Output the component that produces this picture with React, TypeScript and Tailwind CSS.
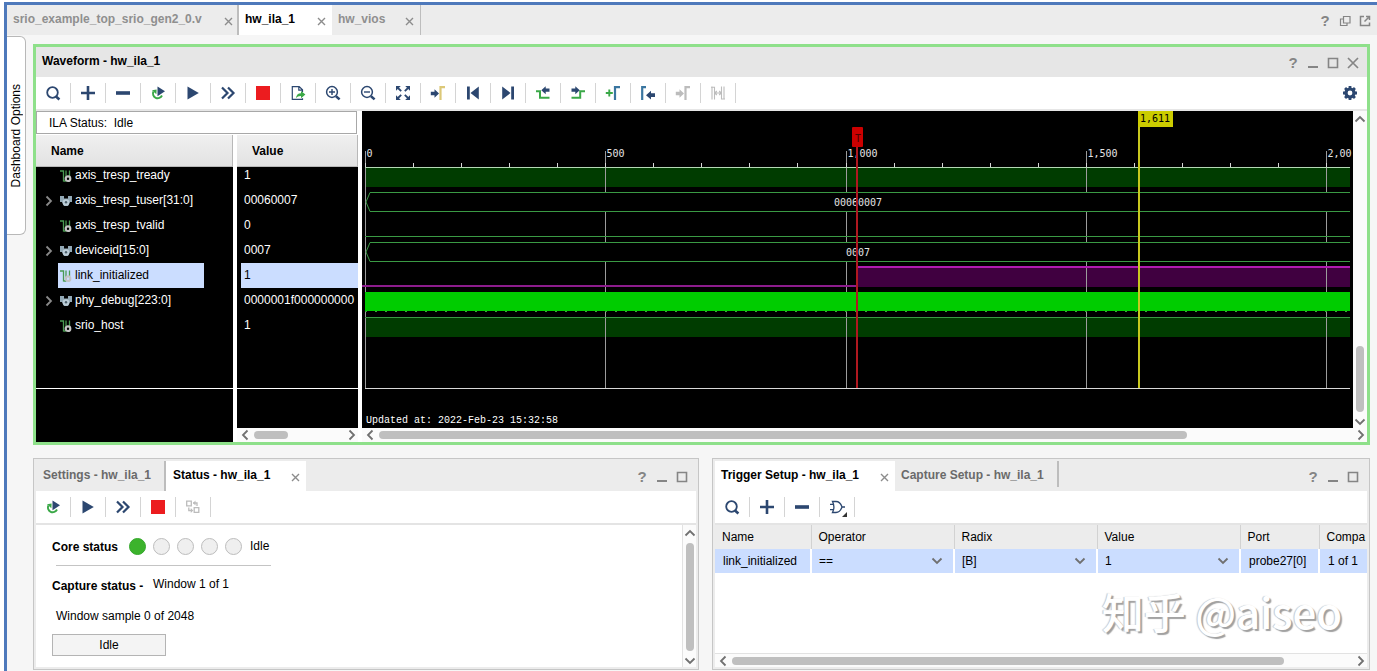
import React, { useState } from 'react';
import clsx from 'clsx';

type Signal = { name: string; value: string; bus?: boolean };

const SIGNALS: Signal[] = [
  { name: 'axis_tresp_tready', value: '1' },
  { name: 'axis_tresp_tuser[31:0]', value: '00060007', bus: true },
  { name: 'axis_tresp_tvalid', value: '0' },
  { name: 'deviceid[15:0]', value: '0007', bus: true },
  { name: 'link_initialized', value: '1' },
  { name: 'phy_debug[223:0]', value: '0000001f000000000', bus: true },
  { name: 'srio_host', value: '1' },
];

const NAVY = '#2c4770';
const GREEN = '#3aa847';
const DIM = '#bcbcbc';

// ── Icons ────────────────────────────────────────────────────────────────────

const Icon: React.FC<{ children: React.ReactNode }> = ({ children }) => (
  <svg width="16" height="16" viewBox="0 0 16 16" fill="none" className="shrink-0">
    {children}
  </svg>
);

const SearchIcon = () => (
  <Icon>
    <circle cx="7.5" cy="7.5" r="5.3" stroke={NAVY} strokeWidth="1.8" />
    <path d="M11 11.5l3.4 3" stroke={NAVY} strokeWidth="2.6" />
  </Icon>
);

const PlusIcon = () => (
  <Icon>
    <path d="M8 1v14M1 8h14" stroke={NAVY} strokeWidth="2.6" />
  </Icon>
);

const MinusIcon = () => (
  <Icon>
    <path d="M1 8h14" stroke={NAVY} strokeWidth="3.6" />
  </Icon>
);

const RerunIcon = () => (
  <Icon>
    <path d="M3.4 6.5a4.6 4.6 0 1 0 8.6 4" stroke={GREEN} strokeWidth="1.9" />
    <path d="M2 5.2l4.6-.7-.2 4.8z" fill={GREEN} />
    <path d="M7.5 1.5L15 6.3l-7.5 5z" fill={NAVY} />
  </Icon>
);

const PlayIcon = () => (
  <Icon>
    <path d="M2.5 1.5L13.8 8 2.5 14.5z" fill={NAVY} />
  </Icon>
);

const FastIcon = () => (
  <Icon>
    <path d="M2 2.5L7.5 8 2 13.5M8 2.5L13.5 8 8 13.5" stroke={NAVY} strokeWidth="2.2" />
  </Icon>
);

const StopIcon = () => (
  <Icon>
    <path d="M1 1h14v14H1z" fill="#ec1c1f" />
  </Icon>
);

const ExportIcon = () => (
  <Icon>
    <path d="M12.5 7V4.8L9.2 1.6H2.3v12.8h10.2v-1.2M8.8 1.8v3.4h3.5" stroke={NAVY} strokeWidth="1.2" />
    <path d="M6 13.3c.2-3.4 2-5 5-5.1V6l4.4 3.6-4.4 3.6V11c-2.3-.1-3.6.5-5 2.3z" fill={GREEN} />
  </Icon>
);

const ZoomIcon = ({ plus = false }: { plus?: boolean }) => (
  <Icon>
    <circle cx="7" cy="7" r="5.4" stroke={NAVY} strokeWidth="1.5" />
    <path d="M11 11.2l3.6 3.2" stroke={NAVY} strokeWidth="2.5" />
    <path d={plus ? 'M7 4v6M4 7h6' : 'M4 7h6'} stroke={NAVY} strokeWidth="1.4" />
  </Icon>
);

const FitIcon = () => (
  <Icon>
    <path d="M3 3l3.2 3.2M13 3L9.8 6.2M3 13l3.2-3.2M13 13L9.8 9.8" stroke={NAVY} strokeWidth="1.8" />
    <path d="M1 1h4.800L1 5.800zM15 1v4.800L10.200 1zM1 15v-4.800L5.800 15zM15 15h-4.800L15 10.200z" fill={NAVY} />
  </Icon>
);

const GotoEdgeIcon = ({ arrow, edge }: { arrow: string; edge: string }) => (
  <Icon>
    <path d="M.8 6.7h3.7V4.3L9 8.5l-4.500 4.200v-2.400H.8z" fill={arrow} />
    <path d="M10.5 15V2.200H15" stroke={edge} strokeWidth="2.2" />
  </Icon>
);

const StartIcon = () => (
  <Icon>
    <path d="M2 1.5h2.800v13H2zM13.800 1.500v13L5.500 8z" fill={NAVY} />
  </Icon>
);

const EndIcon = () => (
  <Icon>
    <path d="M11.2 1.5H14v13h-2.800zM2.200 1.500L10.500 8l-8.300 6.500z" fill={NAVY} />
  </Icon>
);

const PrevEdgeIcon = () => (
  <Icon>
    <path d="M1 6.2h4v6.600h9.500" stroke={GREEN} strokeWidth="2" />
    <path d="M14.500 3.600h-3.800V1.200L6.300 5.200l4.400 4V6.800h3.800z" fill={NAVY} />
  </Icon>
);

const NextEdgeIcon = () => (
  <Icon>
    <path d="M1.500 12.800h8.700V6.200h4.800" stroke={GREEN} strokeWidth="2" />
    <path d="M1.500 3.600h3.800V1.200l4.400 4-4.400 4V6.800H1.500z" fill={NAVY} />
  </Icon>
);

const AddMarkerIcon = () => (
  <Icon>
    <path d="M.8 8h7M4.300 4.500v7" stroke={GREEN} strokeWidth="1.9" />
    <path d="M10 15V2.200h5" stroke="#3a76a0" strokeWidth="2.2" />
  </Icon>
);

const PrevMarkerIcon = () => (
  <Icon>
    <path d="M2.200 15V2.200H6" stroke="#3a76a0" strokeWidth="2.2" />
    <path d="M15 8.300h-4V5.800L6 10.200l5 4.400v-2.500h4z" fill={NAVY} />
  </Icon>
);

const SpanIcon = () => (
  <Icon>
    <path d="M2 1.500v13M1 2.200h3.500v12.300M14 1.500v13M15 14H11.500V1.500" stroke={DIM} strokeWidth="1.1" />
    <path d="M4.500 8h7M6.800 6l-2 2 2 2M9.200 6l2 2-2 2" stroke={DIM} strokeWidth="1.2" />
  </Icon>
);

const SwapIcon = () => (
  <Icon>
    <path d="M1.700 2.200h4.600v4.600H1.700zM9.200 8.700h4.600v4.600H9.200zM8 4h4v3M3.800 8.500v3H7" stroke={DIM} strokeWidth="1.3" />
    <path d="M10.500 1.500v5L8 4zM5.800 9v5l2.400-2.500z" fill={DIM} />
  </Icon>
);

const GateIcon = () => (
  <svg width="20" height="20" viewBox="0 0 20 20" fill="none" className="shrink-0">
    <path d="M5.500 4.500h3.500c3 0 4.800 2 6 5.500-1.200 3.500-3 5.500-6 5.500H5.500c1.800-3.500 1.800-7.500 0-11zM3 7.300h4M3 12.700h4M15 10h3" stroke={NAVY} strokeWidth="1.3" />
    <path d="M20 15v5h-5z" fill="#333" />
  </svg>
);

const GearIcon = () => (
  <Icon>
    <circle cx="8" cy="8" r="4" stroke={NAVY} strokeWidth="3.2" />
    <path
      d="M8 1v3M8 12v3M1 8h3M12 8h3M3.050 3.050l2 2M10.950 10.950l2 2M12.950 3.050l-2 2M3.050 12.950l2-2"
      stroke={NAVY}
      strokeWidth="2.8"
    />
  </Icon>
);

const WindowIcon = ({ kind }: { kind: 'min' | 'max' | 'close' | 'float' | 'popout' }) => (
  <svg width="12" height="12" viewBox="0 0 12 12" fill="none" stroke="#858585" strokeWidth="1.5">
    {kind === 'min' && <path d="M1 10h10" strokeWidth="2" />}
    {kind === 'max' && <path d="M1.500 1.500h9v9h-9z" strokeWidth="1.600" />}
    {kind === 'close' && <path d="M1 1l10 10M11 1L1 11" strokeWidth="1.700" />}
    {kind === 'float' && <path d="M4.500 1.500h6.500V8H4.500zM4.500 4H1.500v6.500H8V8" strokeWidth="1.200" />}
    {kind === 'popout' && <path d="M5 1.500H1.500v9h9V7.500M5.500 6.500l4-4M7 1.500h3.500V5" strokeWidth="1.500" />}
  </svg>
);

const Chevron = ({ d, color = '#707070' }: { d: 'up' | 'down' | 'left' | 'right'; color?: string }) => (
  <svg width="12" height="12" viewBox="0 0 12 12" fill="none" stroke={color} strokeWidth="1.8" className="shrink-0">
    {d === 'up' && <path d="M1.500 8.500L6 4l4.500 4.500" />}
    {d === 'down' && <path d="M1.500 3.500L6 8l4.500-4.500" />}
    {d === 'left' && <path d="M8.500 1.500L4 6l4.500 4.500" />}
    {d === 'right' && <path d="M3.500 1.500L8 6l-4.500 4.500" />}
  </svg>
);

const SignalIcon = ({ bus }: { bus?: boolean }) =>
  bus ? (
    <svg width="14" height="14" viewBox="0 0 14 14" className="shrink-0">
      <path d="M1 2h4v2.500h4V2h4v6h-2L9 12H5L3 8H1z" fill="#93a9b6" />
      <circle cx="7" cy="8.500" r="3.300" fill="#bccdd8" />
      <circle cx="7" cy="8.300" r="1.200" fill="#4d606c" />
    </svg>
  ) : (
    <svg width="14" height="14" viewBox="0 0 14 14" fill="none" className="shrink-0">
      <path d="M1 2h3.500v10.500M7 12.500V1.500M10.500 1.500V7M4.500 12h2.500" stroke="#4a9a52" strokeWidth="1.3" />
      <circle cx="9" cy="9.700" r="2.300" stroke="#c4c4c4" strokeWidth="2.200" />
    </svg>
  );

// ── Small shared pieces ──────────────────────────────────────────────────────

const Tool = ({ label, children }: { label: string; children: React.ReactNode }) => (
  <button
    aria-label={label}
    className="flex h-5 w-[35px] shrink-0 items-center justify-center border-r border-[#d4d4d4]"
  >
    {children}
  </button>
);

const WindowButtons = ({ kinds }: { kinds: ('min' | 'max' | 'close' | 'float' | 'popout')[] }) => (
  <div className="ml-auto flex items-center gap-2 pt-0.5">
    <button aria-label="Help" className="w-3 text-[15px] leading-4 font-bold text-[#858585]">?</button>
    {kinds.map(k => (
      <button key={k} aria-label={k}><WindowIcon kind={k} /></button>
    ))}
  </div>
);

const CloseX = ({ label }: { label: string }) => (
  <button aria-label={label} className="mt-0.5 ml-auto">
    <svg width="9" height="9" viewBox="0 0 9 9" stroke="#8c8c8c" strokeWidth="1.4">
      <path d="M1 1l7 7M8 1L1 8" />
    </svg>
  </button>
);

const HScroll = ({ thumb, className }: { thumb: string; className?: string }) => (
  <div className={clsx('flex h-[14px] items-center bg-[#fbfbfb] pl-0.5', className)}>
    <Chevron d="left" />
    <div className="mx-[3px] flex-1">
      <div className={clsx('h-2 rounded-full bg-[#bfbfbf]', thumb)} />
    </div>
    <Chevron d="right" />
  </div>
);

// ── Waveform canvas ──────────────────────────────────────────────────────────

const ORIGIN = 3;
const PX_PER_TICK = 48.05;
const TICKS = Array.from({ length: 21 }, (_, i) => i);
const MAJOR = [
  { tick: 0, label: '0' },
  { tick: 5, label: '500' },
  { tick: 10, label: '1,000' },
  { tick: 15, label: '1,500' },
  { tick: 20, label: '2,00' },
];

const tickX = (tick: number) => Math.round(ORIGIN + tick * PX_PER_TICK) + 0.5;

const BusLane = ({ y, value }: { y: number; value: string }) => (
  <g>
    <rect x="4" y={y} width="100%" height="20" fill="#000" />
    <path d={`M8 ${y + 0.5}L4 ${y + 10}L8 ${y + 19.5}`} stroke="#3a9a44" fill="none" />
    <line x1="8" x2="100%" y1={y + 0.5} y2={y + 0.5} stroke="#3a9a44" />
    <line x1="8" x2="100%" y1={y + 19.5} y2={y + 19.5} stroke="#3a9a44" />
    <text x="496" y={y + 14} textAnchor="middle" fill="#e4e4e4">{value}</text>
  </g>
);

const WaveCanvas = () => (
  <div className="h-[317px] bg-black">
    <svg
      width="100%"
      height="317"
      className="block font-['DejaVu_Sans_Mono','Liberation_Mono',monospace] text-[10px]"
    >
      {/* signal fills */}
      <rect x="3" y="57" width="100%" height="19" fill="#003c00" />
      <rect x="495" y="156" width="100%" height="20" fill="#400040" />
      <rect x="3" y="207" width="100%" height="19" fill="#003c00" />

      {/* time grid */}
      {MAJOR.map(m => (
        <line key={m.tick} x1={tickX(m.tick)} x2={tickX(m.tick)} y1="40" y2="277" stroke="#9c9c9c" />
      ))}
      {TICKS.map(t => (
        <line key={t} x1={tickX(t)} x2={tickX(t)} y1="52" y2="56" stroke="#d8d8d8" />
      ))}
      <line x1="3" x2="100%" y1="56.5" y2="56.5" stroke="#b4d8b4" />
      <line x1="3" x2="100%" y1="277.5" y2="277.5" stroke="#d8d8d8" />

      <BusLane y={81} value="00060007" />
      <line x1="3" x2="100%" y1="125.5" y2="125.5" stroke="#3a9a44" />
      <BusLane y={131} value="0007" />

      {/* link_initialized goes high at the trigger */}
      <line x1="0" x2="495" y1="175" y2="175" stroke="#8c1c8c" strokeWidth="2" />
      <line x1="495" x2="100%" y1="156" y2="156" stroke="#b01cb0" strokeWidth="2" />

      {/* phy_debug toggles on every sample */}
      <rect x="3" y="181" width="100%" height="19" fill="#00cc00" />
      <line x1="3" x2="100%" y1="200.5" y2="200.5" stroke="#3f9f3f" strokeDasharray="2 8" />
      <line x1="3" x2="100%" y1="206.5" y2="206.5" stroke="#3a9a44" />

      {/* samples stop just short of the canvas edge */}
      <rect x="100%" y="50" width="3" height="230" fill="#000" transform="translate(-3 0)" />
      {MAJOR.map(m => (
        <text key={m.tick} x={tickX(m.tick) + 1} y="46" fill="#e4e4e4">{m.label}</text>
      ))}

      {/* trigger marker */}
      <rect x="490" y="16" width="11" height="20" rx="1" fill="#cc0000" />
      <text x="493" y="31" fill="#4a0000">T</text>
      <line x1="495" x2="495" y1="36" y2="277" stroke="#b01820" strokeWidth="2" />

      {/* cursor */}
      <line x1="777" x2="777" y1="0" y2="277" stroke="#c8c81e" strokeWidth="2" />
      <rect x="776" y="0" width="35" height="16" fill="#cccc00" />
      <text x="778" y="11" fill="#000">1,611</text>

      <text x="4" y="312" fill="#fff" className="font-['Liberation_Mono',monospace]">
        Updated at: 2022-Feb-23 15:32:58
      </text>
    </svg>
  </div>
);

const headCell =
  'flex h-8 items-center border-r border-b border-[#b8b8b8] bg-gradient-to-b from-[#f0f0f0] to-[#e2e2e2] font-bold';

const WaveformPanel = () => {
  const [selected, setSelected] = useState('link_initialized');

  return (
    <section className="border-[3px] border-[#8ee08a] bg-white">
      <header className="flex h-[30px] items-center bg-[#e6e6e6] pr-2 pl-1.5">
        <h2 className="pb-0.5 font-bold">Waveform - hw_ila_1</h2>
        <WindowButtons kinds={['min', 'max', 'close']} />
      </header>
      <div className="flex h-[34px] items-center border-b-2 border-[#e6e6e6]">
        <Tool label="Find"><SearchIcon /></Tool>
        <Tool label="Add probes"><PlusIcon /></Tool>
        <Tool label="Remove selected"><MinusIcon /></Tool>
        <Tool label="Auto re-trigger"><RerunIcon /></Tool>
        <Tool label="Run trigger"><PlayIcon /></Tool>
        <Tool label="Run trigger immediate"><FastIcon /></Tool>
        <Tool label="Stop trigger"><StopIcon /></Tool>
        <Tool label="Export data"><ExportIcon /></Tool>
        <Tool label="Zoom in"><ZoomIcon plus /></Tool>
        <Tool label="Zoom out"><ZoomIcon /></Tool>
        <Tool label="Zoom fit"><FitIcon /></Tool>
        <Tool label="Go to cursor"><GotoEdgeIcon arrow={NAVY} edge="#dcc878" /></Tool>
        <Tool label="Go to start"><StartIcon /></Tool>
        <Tool label="Go to end"><EndIcon /></Tool>
        <Tool label="Previous transition"><PrevEdgeIcon /></Tool>
        <Tool label="Next transition"><NextEdgeIcon /></Tool>
        <Tool label="Add marker"><AddMarkerIcon /></Tool>
        <Tool label="Previous marker"><PrevMarkerIcon /></Tool>
        <Tool label="Next marker"><GotoEdgeIcon arrow={DIM} edge={DIM} /></Tool>
        <Tool label="Swap cursors"><SpanIcon /></Tool>
        <button aria-label="Settings" className="mr-[9px] ml-auto"><GearIcon /></button>
      </div>

      <div className="flex">
        <div className="w-[322px] shrink-0">
          <div className="mr-px mb-px flex h-[23px] items-center border border-[#a8a8a8] pl-3 whitespace-pre">
            {'ILA Status:  Idle'}
          </div>
          <div className="flex gap-1">
            <div className="w-[197px]">
              <div className={clsx(headCell, 'pl-[15px]')}>Name</div>
              <ul className="h-[222px] overflow-hidden border-b border-white bg-black text-white">
                {SIGNALS.map((s, i) => (
                  <li key={s.name} className={clsx('flex h-[25px] items-center', i === 0 && '-mt-1')}>
                    <span className="flex w-[22px] justify-center pl-1">
                      {s.bus && <Chevron d="right" color="#8a8a8a" />}
                    </span>
                    <button
                      onClick={() => setSelected(s.name)}
                      className={clsx(
                        'flex h-[25px] w-[146px] items-center gap-0.5 pl-px leading-[25px] whitespace-nowrap',
                        selected === s.name && 'bg-[#cbddff] text-black',
                      )}
                    >
                      <SignalIcon bus={s.bus} />
                      {s.name}
                    </button>
                  </li>
                ))}
              </ul>
              <div className="h-[53px] bg-black" />
            </div>
            <div className="w-[121px]">
              <div className={clsx(headCell, 'pl-[15px]')}>Value</div>
              <ul className="h-[222px] overflow-hidden border-b border-white bg-black pl-1 text-white">
                {SIGNALS.map((s, i) => (
                  <li
                    key={s.name}
                    className={clsx(
                      'h-[25px] pl-[3px] leading-[25px] whitespace-nowrap',
                      i === 0 && '-mt-1',
                      selected === s.name && 'bg-[#cbddff] text-black',
                    )}
                  >
                    {s.value}
                  </li>
                ))}
              </ul>
              <div className="h-[39px] bg-black" />
              <HScroll thumb="w-[34px]" />
            </div>
          </div>
        </div>

        <div className="ml-1 flex min-w-0 flex-1 flex-col">
          <div className="flex">
            <div className="min-w-0 flex-1"><WaveCanvas /></div>
            <div className="flex w-[14px] flex-col items-center bg-[#fbfbfb] pt-0.5">
              <Chevron d="up" />
              <div className="mt-auto mb-1 h-[66px] w-2 rounded-full bg-[#bfbfbf]" />
              <Chevron d="down" />
            </div>
          </div>
          <HScroll thumb="w-[83%]" />
        </div>
      </div>
    </section>
  );
};

// ── Lower panels ─────────────────────────────────────────────────────────────

const panel = 'min-w-0 border border-[#c6c6c6] bg-[#ececec] p-0.5';

const StatusPanel = () => (
  <section className={panel}>
    <header className="flex h-[30px] pr-2">
      <button className="flex w-[130px] items-center border-r-2 border-[#bdbdbd] pb-0.5 pl-[7px] font-bold text-[#6a6a6a]">
        Settings - hw_ila_1
      </button>
      <div className="flex w-[140px] items-center bg-white pr-1.5 pl-[7px] font-bold">
        <span className="pb-0.5">Status - hw_ila_1</span>
        <CloseX label="Close Status" />
      </div>
      <WindowButtons kinds={['min', 'max']} />
    </header>
    <div className="flex h-[34px] items-center border-b-2 border-[#e4e4e4] bg-white">
      <Tool label="Auto re-trigger"><RerunIcon /></Tool>
      <Tool label="Run trigger"><PlayIcon /></Tool>
      <Tool label="Run trigger immediate"><FastIcon /></Tool>
      <Tool label="Stop trigger"><StopIcon /></Tool>
      <Tool label="Compact view"><SwapIcon /></Tool>
    </div>
    <div className="flex h-[142px] bg-white">
      <div className="flex-1 pt-3 pl-4">
        <div className="flex items-center">
          <span className="w-[77px] pt-0.5 font-bold">Core status</span>
          <div className="flex gap-[7px]">
            {[true, false, false, false, false].map((on, i) => (
              <span
                key={i}
                className={clsx(
                  'size-[17px] rounded-full border',
                  on ? 'border-[#35a82c] bg-[#3cb32c]' : 'border-[#bdbdbd] bg-[#efefef]',
                )}
              />
            ))}
          </div>
          <span className="pl-2">Idle</span>
        </div>
        <hr className="mt-2.5 ml-1 w-[215px] border-[#c4c4c4]" />
        <p className="mt-2.5 flex leading-4">
          <span className="w-[101px] pt-0.5 font-bold">Capture status -</span>
          Window 1 of 1
        </p>
        <p className="mt-3.5 ml-1 leading-4">Window sample 0 of 2048</p>
        <div className="mt-2.5 flex h-[22px] w-[114px] items-center justify-center border border-[#b4b4b4] bg-[#f4f4f4]">
          Idle
        </div>
      </div>
      <div className="flex w-[14px] flex-col items-center border-l border-[#e2e2e2] bg-[#fbfbfb] pt-0.5">
        <Chevron d="up" />
        <div className="my-1 w-2 flex-1 rounded-full bg-[#bfbfbf]" />
        <Chevron d="down" />
      </div>
    </div>
  </section>
);

const PickCell = ({ label, options }: { label: string; options: string[] }) => (
  <td className="relative border-r-2 border-white p-0">
    <select
      aria-label={label}
      className="h-6 w-full appearance-none bg-transparent pl-[7px] outline-none"
    >
      {options.map(o => <option key={o}>{o}</option>)}
    </select>
    <span className="pointer-events-none absolute top-1.5 right-2.5"><Chevron d="down" /></span>
  </td>
);

const TriggerPanel = () => (
  <section className={clsx(panel, 'relative')}>
    <header className="flex h-[30px] pr-2">
      <div className="flex w-[180px] items-center bg-white pr-1.5 pl-1.5 font-bold">
        <span className="pb-0.5">Trigger Setup - hw_ila_1</span>
        <CloseX label="Close Trigger Setup" />
      </div>
      <button className="mb-1 flex w-[164px] items-center border-r-2 border-[#bdbdbd] pl-1.5 font-bold text-[#6a6a6a]">
        <span className="pt-0.5">Capture Setup - hw_ila_1</span>
      </button>
      <WindowButtons kinds={['min', 'max']} />
    </header>
    <div className="flex h-[34px] items-center border-b-2 border-[#e4e4e4] bg-white">
      <Tool label="Find"><SearchIcon /></Tool>
      <Tool label="Add probes"><PlusIcon /></Tool>
      <Tool label="Remove probes"><MinusIcon /></Tool>
      <Tool label="Trigger condition"><GateIcon /></Tool>
    </div>
    <div className="h-[128px] overflow-hidden bg-white">
      <table className="w-full min-w-[652px] table-fixed border-collapse text-left whitespace-nowrap">
        <colgroup>
          <col className="w-[96px]" />
          <col className="w-[143px]" />
          <col className="w-[143px]" />
          <col className="w-[143px]" />
          <col className="w-[79px]" />
          <col />
        </colgroup>
        <thead>
          <tr className="h-6 bg-[#ececec]">
            {['Name', 'Operator', 'Radix', 'Value', 'Port', 'Compa'].map(h => (
              <th key={h} className="border-r border-[#d2d2d2] p-0 pl-[7px] font-normal last:border-r-0">
                {h}
              </th>
            ))}
          </tr>
        </thead>
        <tbody>
          <tr className="h-6 bg-[#cbddff]">
            <td className="border-r-2 border-white p-0 pl-2">link_initialized</td>
            <PickCell label="Operator" options={['==', '!=']} />
            <PickCell label="Radix" options={['[B]', '[H]', '[U]']} />
            <PickCell label="Value" options={['1', '0', 'X']} />
            <td className="border-r-2 border-white p-0 pl-2">probe27[0]</td>
            <td className="p-0 pl-2">1 of 1</td>
          </tr>
        </tbody>
      </table>
    </div>
    <HScroll thumb="w-[89%]" className="border-t border-[#e2e2e2]" />
    <div className="pointer-events-none absolute right-[27px] bottom-7 font-['Noto_Sans_CJK_SC',sans-serif] text-[42px] leading-[60px] font-medium whitespace-nowrap text-white [text-shadow:-1px_0_1px_#c4c4c4,2px_2px_1px_#a0a0a0]">
      知乎 @aiseo
    </div>
  </section>
);

export default function App() {
  return (
    <div className="min-h-screen bg-white pt-0.5 pl-1 font-['Liberation_Sans',Arial,sans-serif] text-xs text-black">
      <div className="min-h-[669px] border-t-[3px] border-l-[3px] border-[#4e79bb] bg-[#f6f6f6]">
        <nav className="flex h-[30px] bg-[#ececec] pr-1.5 font-bold text-[#8f8f8f]">
          <div className="flex w-[232px] items-center border-r-2 border-[#bdbdbd] pr-1 pl-1.5">
            <button className="pb-0.5">srio_example_top_srio_gen2_0.v</button>
            <CloseX label="Close file" />
          </div>
          <div className="flex w-[93px] items-center bg-white pr-1.5 pl-1.5">
            <button className="pb-0.5 text-black">hw_ila_1</button>
            <CloseX label="Close hw_ila_1" />
          </div>
          <div className="flex w-[89px] items-center border-r border-[#bdbdbd] pr-1.5 pl-1.5">
            <button className="pb-0.5">hw_vios</button>
            <CloseX label="Close hw_vios" />
          </div>
          <WindowButtons kinds={['float', 'popout']} />
        </nav>

        <div className="flex">
          <aside className="pt-px">
            <button className="flex h-[199px] w-[19px] items-center justify-center rounded-r-md border border-l-0 border-[#b8b8b8] bg-white">
              <span className="rotate-180 leading-4 whitespace-nowrap [writing-mode:vertical-rl]">
                Dashboard Options
              </span>
            </button>
          </aside>
          <main className="min-w-0 flex-1 pt-[9px] pr-[7px] pl-[7px]">
            <WaveformPanel />
            <div className="mt-[13px] grid grid-cols-[666fr_658fr] gap-[13px]">
              <StatusPanel />
              <TriggerPanel />
            </div>
          </main>
        </div>
      </div>
    </div>
  );
}
